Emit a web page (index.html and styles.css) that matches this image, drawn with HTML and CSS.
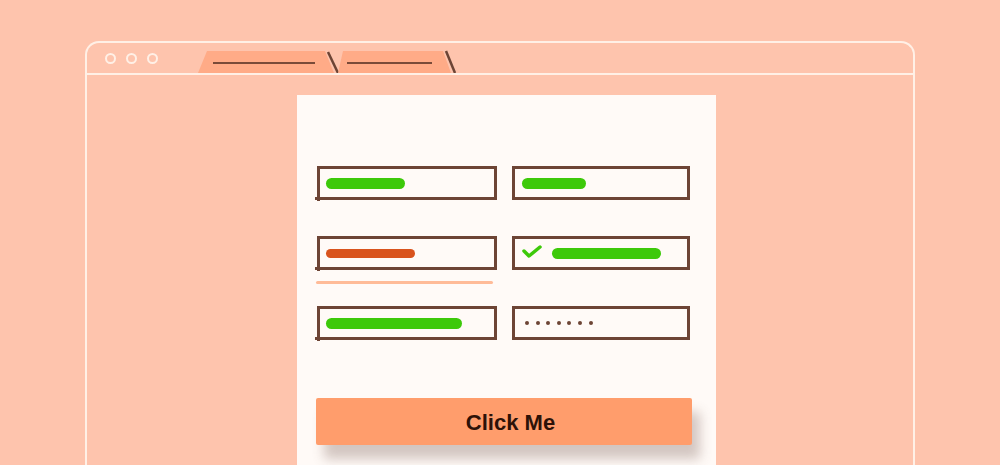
FILE: index.html
```html
<!DOCTYPE html>
<html lang="en">

<head>
    <meta charset="UTF-8">
    <meta name="viewport" content="width=device-width, initial-scale=1.0">
    <title>Form Demo</title>
    <link rel="stylesheet" href="styles.css">
</head>

<body>
    <div class="browser">
        <div class="browser-bar">
            <div class="dots">
                <span></span>
                <span></span>
                <span></span>
            </div>
            <svg class="tabs" width="262" height="30" viewBox="0 0 262 30">
                <polygon points="0,30 9,8 127,8 136,30" fill="#ffab87" />
                <line x1="15" y1="20" x2="117" y2="20" stroke="#7a4a38" stroke-width="2" />
                <line x1="130" y1="9" x2="140" y2="30" stroke="#6d4435" stroke-width="2.5" />
                <polygon points="140,30 145,8 245,8 253,30" fill="#ffab87" />
                <line x1="149" y1="20" x2="234" y2="20" stroke="#7a4a38" stroke-width="2" />
                <line x1="248" y1="8" x2="257" y2="30" stroke="#6d4435" stroke-width="2.5" />
            </svg>
        </div>

        <div class="page">
            <div class="card">
                <div class="form-grid">
                    <div class="field sketch">
                        <span class="fill green w-79"></span>
                    </div>
                    <div class="field">
                        <span class="fill green w-64"></span>
                    </div>

                    <div class="field-wrap">
                        <div class="field sketch">
                            <span class="fill orange w-89"></span>
                        </div>
                        <div class="underline"></div>
                    </div>
                    <div class="field">
                        <svg class="check" width="20" height="14" viewBox="0 0 20 14">
                            <path d="M2 6 L7 11 L18 2" fill="none" stroke="#3dc90a" stroke-width="3.5" stroke-linecap="round" stroke-linejoin="round" />
                        </svg>
                        <span class="fill green w-109"></span>
                    </div>

                    <div class="field sketch">
                        <span class="fill green w-136"></span>
                    </div>
                    <div class="field">
                        <span class="password">
                            <i></i><i></i><i></i><i></i><i></i><i></i><i></i>
                        </span>
                    </div>
                </div>

                <button class="cta">Click Me</button>
            </div>
        </div>
    </div>
</body>

</html>
```

FILE: styles.css
```css
html,
body {
    overflow: hidden;
}

body {
    margin: 0;
    padding: 0;
    background: #fec4ad;
    font-family: "Liberation Sans", Arial, sans-serif;
    height: 465px;
}

.browser {
    margin: 41px 0 0 85px;
    width: 826px;
    height: 440px;
    border: 2px solid #fff0e6;
    border-bottom: none;
    border-radius: 14px 14px 0 0;
}

.browser-bar {
    display: flex;
    align-items: center;
    height: 30px;
    border-bottom: 2px solid #fff0e6;
}

.dots {
    display: flex;
    gap: 10px;
    padding-left: 18px;
}

.dots span {
    width: 7px;
    height: 7px;
    border: 2px solid #fff0e6;
    border-radius: 50%;
}

.tabs {
    display: block;
    margin-left: 40px;
    align-self: flex-end;
}

.page {
    padding: 20px 0 0 210px;
}

.card {
    width: 379px;
    height: 350px;
    padding: 71px 20px 0 20px;
    background: #fffaf7;
}

.form-grid {
    display: grid;
    grid-template-columns: 180px 178px;
    grid-template-rows: 34px 34px 34px;
    column-gap: 15px;
    row-gap: 36px;
}

.field {
    position: relative;
    display: flex;
    align-items: center;
    gap: 10px;
    height: 28px;
    padding: 0 7px;
    border: 3px solid #6d4435;
}

/* hand drawn corner on the left column: left stroke runs a bit long */
.field.sketch {
    padding-left: 6px;
}

.field.sketch::after {
    content: "";
    position: absolute;
    left: -3px;
    bottom: -4px;
    width: 3px;
    height: 1px;
    background: #6d4435;
}

.field.sketch::before {
    content: "";
    position: absolute;
    left: -5px;
    bottom: -3px;
    width: 2px;
    height: 3px;
    background: #6d4435;
}

.fill {
    display: block;
    height: 11px;
    border-radius: 6px;
}

.fill.green {
    background: #3dc90a;
}

.fill.orange {
    height: 9px;
    background: #d9531d;
}

.w-64 { width: 64px; }
.w-79 { width: 79px; }
.w-89 { width: 89px; }
.w-109 { width: 109px; }
.w-136 { width: 136px; }

.underline {
    height: 3px;
    width: 177px;
    margin: 11px 0 0 -1px;
    border-radius: 2px;
    background: #ffbb98;
}

.check {
    display: block;
    margin-top: -2px;
}

.password {
    display: flex;
    gap: 6.6px;
    padding-left: 3px;
}

.password i {
    display: block;
    width: 4px;
    height: 4px;
    border-radius: 50%;
    background: #6d4435;
}

.cta {
    display: block;
    width: 376px;
    height: 47px;
    margin: 58px 0 0 -1px;
    padding: 2px 0 0 13px;
    border: none;
    border-radius: 2px;
    background: #ff9d6c;
    color: #2d1208;
    font-family: "Liberation Sans", Arial, sans-serif;
    font-size: 22px;
    font-weight: bold;
    box-shadow: 8px 14px 12px rgba(110, 80, 70, 0.3);
    cursor: pointer;
}
```
